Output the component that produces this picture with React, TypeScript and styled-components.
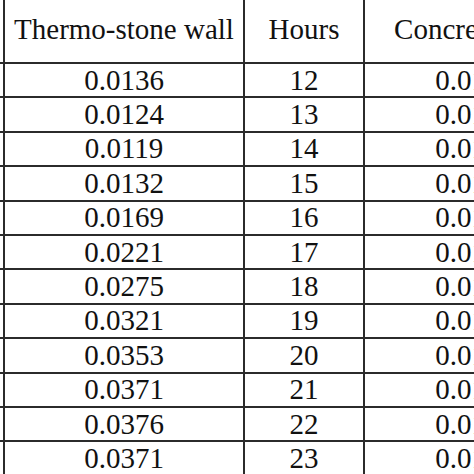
import styled, { createGlobalStyle } from 'styled-components';

const GlobalStyle = createGlobalStyle`
  html, body {
    margin: 0;
    padding: 0;
    background: #ffffff;
    overflow: hidden;
  }
`;

const Frame = styled.div`
  width: 474px;
  height: 474px;
  overflow: hidden;
  background: #ffffff;
`;

const Table = styled.table`
  border-collapse: collapse;
  table-layout: fixed;
  width: 622px;
  margin-top: -6px;
  margin-left: -37px;
`;

const Cell = styled.td<{ $head?: boolean; $w: number }>`
  width: ${(p) => p.$w}px;
  border: 2px solid #2b2b2b;
  text-align: center;
  vertical-align: middle;
  padding: 0;
  white-space: nowrap;
  overflow: hidden;
  height: ${(p) => (p.$head ? '66px' : '32.4px')};
  line-height: 1;
  font-family: 'Liberation Serif', 'Times New Roman', serif;
  font-size: 29px;
  font-weight: 400;
  color: #111;
`;

const widths = [40, 240, 120, 222];
const heads = ['', 'Thermo-stone wall', 'Hours', 'Concrete wall'];

const rows = [
  ['', '0.0136', '12', '0.0178'],
  ['', '0.0124', '13', '0.0165'],
  ['', '0.0119', '14', '0.0157'],
  ['', '0.0132', '15', '0.0160'],
  ['', '0.0169', '16', '0.0188'],
  ['', '0.0221', '17', '0.0141'],
  ['', '0.0275', '18', '0.0198'],
  ['', '0.0321', '19', '0.0147'],
  ['', '0.0353', '20', '0.0181'],
  ['', '0.0371', '21', '0.0199'],
  ['', '0.0376', '22', '0.0102'],
  ['', '0.0371', '23', '0.0195'],
];

export default function App() {
  return (
    <Frame>
      <GlobalStyle />
      <Table>
        <colgroup>
          {widths.map((w, i) => (
            <col key={i} style={{ width: w }} />
          ))}
        </colgroup>
        <thead>
          <tr>
            {heads.map((h, i) => (
              <Cell as="th" key={i} $head $w={widths[i]}>
                {h}
              </Cell>
            ))}
          </tr>
        </thead>
        <tbody>
          {rows.map((r, i) => (
            <tr key={i}>
              {r.map((v, j) => (
                <Cell key={j} $w={widths[j]}>
                  {v}
                </Cell>
              ))}
            </tr>
          ))}
        </tbody>
      </Table>
    </Frame>
  );
}
